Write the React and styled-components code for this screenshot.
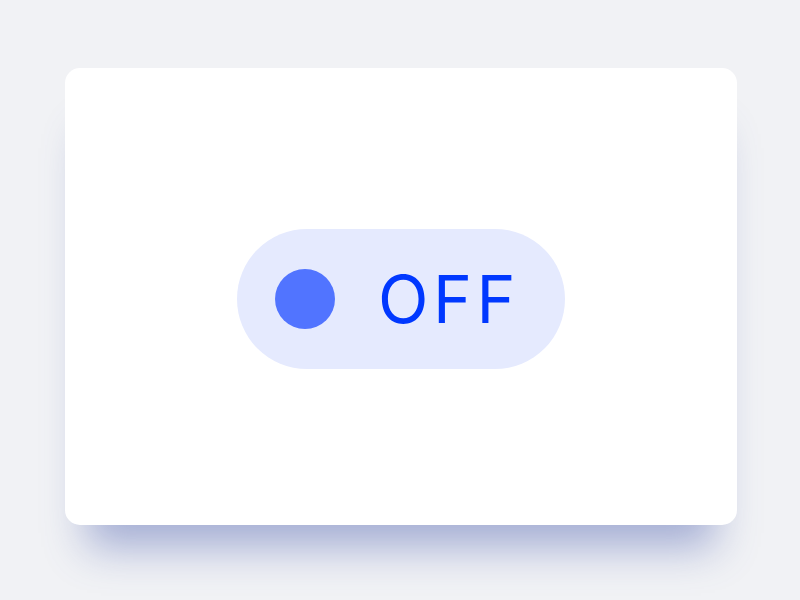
import React, { useState } from 'react';
import styled, { createGlobalStyle } from 'styled-components';

const GlobalStyle = createGlobalStyle`
  html, body {
    margin: 0;
    padding: 0;
    background: #f1f2f5;
  }
`;

const Page = styled.div`
  width: 800px;
  height: 600px;
  box-sizing: border-box;
  padding: 68px 63px 0 65px;
  background: #f1f2f5;
  font-family: Inter, "Liberation Sans", Arial, sans-serif;
`;

const Card = styled.div`
  height: 457px;
  background: #ffffff;
  border-radius: 15px;
  box-shadow: 0 44px 40px -22px rgba(80, 98, 175, 0.48);
  display: flex;
  align-items: center;
  justify-content: center;
  padding-top: 5px;
  box-sizing: border-box;
`;

const Toggle = styled.button`
  width: 328px;
  height: 140px;
  border: none;
  border-radius: 70px;
  background: ${p => (p.$on ? '#0038ff' : '#e5eafe')};
  display: flex;
  align-items: center;
  padding: 0 0 0 38px;
  box-sizing: border-box;
  cursor: pointer;
  font-family: inherit;
`;

const Knob = styled.span`
  width: 60px;
  height: 60px;
  border-radius: 50%;
  background: #5174ff;
  flex-shrink: 0;
`;

const Label = styled.span`
  margin-left: 43px;
  font-size: 66px;
  font-weight: 400;
  line-height: 1;
  color: #0038ff;
  letter-spacing: 0.068em;
`;

export default function App() {
  const [on, setOn] = useState(false);
  return (
    <Page>
      <GlobalStyle />
      <Card>
        <Toggle $on={on} onClick={() => setOn(false)}>
          <Knob />
          <Label>OFF</Label>
        </Toggle>
      </Card>
    </Page>
  );
}
